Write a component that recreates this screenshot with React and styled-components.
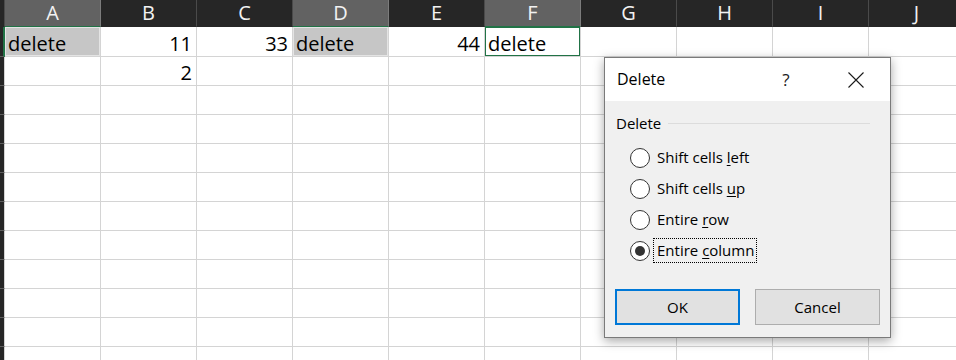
import React, { useState } from "react";
import styled, { createGlobalStyle } from "styled-components";

const COLUMNS = ["A", "B", "C", "D", "E", "F", "G", "H", "I", "J"];
const SELECTED_COLUMNS = ["A", "D", "F"];
const ROW_COUNT = 12;

const CELLS = {
  "A1": { value: "delete", kind: "selected" },
  "B1": { value: "11", align: "right" },
  "C1": { value: "33", align: "right" },
  "D1": { value: "delete", kind: "selected" },
  "E1": { value: "44", align: "right" },
  "F1": { value: "delete", kind: "active" },
  "B2": { value: "2", align: "right" },
};

const OPTIONS = [
  { id: "left", before: "Shift cells ", key: "l", after: "eft" },
  { id: "up", before: "Shift cells ", key: "u", after: "p" },
  { id: "row", before: "Entire ", key: "r", after: "ow" },
  { id: "column", before: "Entire ", key: "c", after: "olumn" },
];

const App = () => {
  const [choice, setChoice] = useState("column");

  const rows = Array.from({ length: ROW_COUNT }, (_, i) => i + 1);

  return (
    <Screen>
      <GlobalStyle />
      <Sheet>
        <Corner />
        {COLUMNS.map((col) => (
          <ColumnHead key={col} selected={SELECTED_COLUMNS.includes(col)}>
            {col}
          </ColumnHead>
        ))}
        {rows.map((row) => (
          <React.Fragment key={row}>
            <RowHead selected={row === 1} />
            {COLUMNS.map((col) => {
              const cell = CELLS[`${col}${row}`] || {};
              return (
                <Cell key={col} kind={cell.kind} align={cell.align}>
                  {cell.value}
                </Cell>
              );
            })}
          </React.Fragment>
        ))}
      </Sheet>

      <Dialog>
        <TitleBar>
          <Title>Delete</Title>
          <TitleButton>?</TitleButton>
          <TitleButton>
            <svg width="16" height="16" viewBox="0 0 16 16">
              <path
                d="M0.5 0.5 L15.5 15.5 M15.5 0.5 L0.5 15.5"
                stroke="#1a1a1a"
                strokeWidth="1.1"
                fill="none"
              />
            </svg>
          </TitleButton>
        </TitleBar>
        <DialogBody>
          <GroupHeader>
            <GroupLabel>Delete</GroupLabel>
            <GroupLine />
          </GroupHeader>
          <OptionList>
            {OPTIONS.map((opt) => (
              <OptionRow key={opt.id} onClick={() => setChoice(opt.id)}>
                <Radio checked={choice === opt.id} />
                <OptionLabel focused={choice === opt.id}>
                  {opt.before}
                  <u>{opt.key}</u>
                  {opt.after}
                </OptionLabel>
              </OptionRow>
            ))}
          </OptionList>
          <ButtonRow>
            <DialogButton primary>OK</DialogButton>
            <DialogButton>Cancel</DialogButton>
          </ButtonRow>
        </DialogBody>
      </Dialog>
    </Screen>
  );
};

export default App;

const GlobalStyle = createGlobalStyle`
  html, body {
    margin: 0;
    padding: 0;
    background: #ffffff;
    overflow: hidden;
  }
  * {
    box-sizing: border-box;
  }
`;

const Screen = styled.div`
  position: relative;
  width: 956px;
  height: 360px;
  overflow: hidden;
  background: #ffffff;
`;

const Sheet = styled.div`
  display: grid;
  grid-template-columns: 5px repeat(10, 96px);
  grid-template-rows: 27px 30px repeat(11, 29px);
  font-family: "Open Sans", sans-serif;
`;

const Corner = styled.div`
  background: #262626;
  border-right: 1px solid #4a4a4a;
  border-bottom: 1px solid #262626;
`;

const ColumnHead = styled.div`
  display: flex;
  align-items: center;
  justify-content: center;
  padding-bottom: 1px;
  background: ${({ selected }) => (selected ? "#626262" : "#262626")};
  border-right: 1px solid ${({ selected }) => (selected ? "#7c7c7c" : "#4a4a4a")};
  border-bottom: 1px solid
    ${({ selected }) => (selected ? "#217346" : "#262626")};
  color: #f2f2f2;
  font-size: 20px;
  line-height: 24px;
`;

const RowHead = styled.div`
  background: #262626;
  border-bottom: 1px solid #5e5e5e;
  border-right: ${({ selected }) =>
    selected ? "2px solid #217346" : "1px solid #d4d4d4"};
`;

const Cell = styled.div`
  display: flex;
  align-items: flex-end;
  justify-content: ${({ align }) =>
    align === "right" ? "flex-end" : "flex-start"};
  padding: 0 4px 1px 3px;
  border-right: 1px solid #d4d4d4;
  border-bottom: 1px solid #d4d4d4;
  background: ${({ kind }) => (kind === "selected" ? "#c6c6c6" : "#ffffff")};
  box-shadow: ${({ kind }) =>
    kind === "selected"
      ? "inset 0 0 0 1px #e4e4e4"
      : kind === "active"
      ? "inset 0 0 0 1px #217346"
      : "none"};
  color: #000000;
  font-size: 20px;
  line-height: 22px;
  white-space: nowrap;
  overflow: hidden;
`;

const Dialog = styled.div`
  position: absolute;
  left: 604px;
  top: 57px;
  width: 287px;
  height: 281px;
  display: flex;
  flex-direction: column;
  border: 1px solid #7a7a7a;
  background: #f0f0f0;
  box-shadow: 0 3px 10px rgba(0, 0, 0, 0.35);
  font-family: "Open Sans", sans-serif;
  color: #000000;
`;

const TitleBar = styled.div`
  display: flex;
  align-items: center;
  height: 43px;
  padding: 0 11px 0 12px;
  background: #ffffff;
`;

const Title = styled.div`
  flex: 1;
  font-size: 16px;
  padding-bottom: 1px;
`;

const TitleButton = styled.div`
  display: flex;
  align-items: center;
  justify-content: center;
  width: 46px;
  height: 30px;
  font-size: 17px;
  color: #1a1a1a;

  & + & {
    margin-left: 24px;
  }
`;

const DialogBody = styled.div`
  flex: 1;
  display: flex;
  flex-direction: column;
  padding: 12px 10px 12px 11px;
`;

const GroupHeader = styled.div`
  display: flex;
  align-items: center;
  gap: 7px;
  height: 20px;
  padding-right: 10px;
`;

const GroupLabel = styled.span`
  font-size: 15px;
  line-height: 20px;
`;

const GroupLine = styled.div`
  flex: 1;
  height: 1px;
  background: #dcdcdc;
`;

const OptionList = styled.div`
  display: flex;
  flex-direction: column;
  margin-top: 9px;
  padding-left: 14px;
`;

const OptionRow = styled.div`
  display: flex;
  align-items: center;
  height: 31px;
  cursor: default;
`;

const Radio = styled.span`
  position: relative;
  width: 20px;
  height: 20px;
  border: 1px solid #333333;
  border-radius: 50%;
  background: #ffffff;

  &::after {
    content: "";
    display: ${({ checked }) => (checked ? "block" : "none")};
    position: absolute;
    left: 4px;
    top: 4px;
    width: 10px;
    height: 10px;
    border-radius: 50%;
    background: #333333;
  }
`;

const OptionLabel = styled.span`
  margin-left: 4px;
  padding: 0 2px 1px 3px;
  font-size: 15px;
  line-height: 22px;
  outline: ${({ focused }) => (focused ? "1px dotted #000000" : "none")};
  outline-offset: 0;

  u {
    text-underline-offset: 2px;
  }
`;

const ButtonRow = styled.div`
  display: flex;
  gap: 15px;
  margin-top: auto;
  margin-left: -1px;
`;

const DialogButton = styled.button`
  width: 125px;
  height: 36px;
  padding: 0;
  background: #e1e1e1;
  border: ${({ primary }) =>
    primary ? "2px solid #0078d7" : "1px solid #adadad"};
  border-radius: 0;
  font-family: "Open Sans", sans-serif;
  font-size: 15px;
  color: #000000;
  cursor: pointer;
`;
